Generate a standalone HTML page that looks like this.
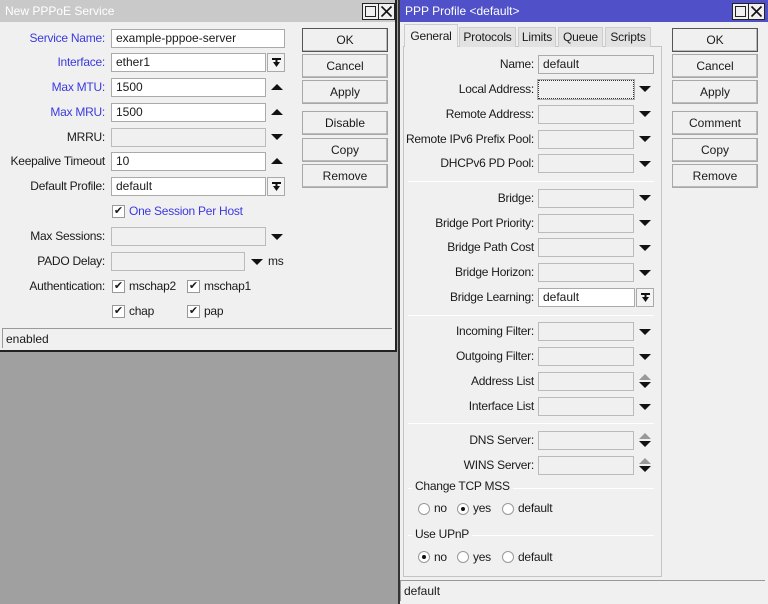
<!DOCTYPE html>
<html><head><meta charset="utf-8"><style>
*{box-sizing:border-box;margin:0;padding:0}
body{width:768px;height:604px;background:#a0a0a0;position:relative;overflow:hidden;font-family:"Liberation Sans",sans-serif;font-size:12px;color:#1a1a1a}
.a{position:absolute}
.win{position:absolute;background:#f0f0f0}
.tb{position:absolute;left:0;top:0;right:0;height:22px;color:#fff;font-size:12px;line-height:22px;padding-left:5px}
.tbb{position:absolute;top:3px;width:17px;height:17px}
.lbl{position:absolute;text-align:right;line-height:18px;white-space:nowrap;letter-spacing:-0.25px}
.blue{color:#3a3adf}
.in{position:absolute;height:19px;background:#fff;border:1px solid #aaa;line-height:17px;padding-left:4px}
.dis{background:#f0f0f0;border:1px solid #bbb}
.btn{position:absolute;width:86px;height:24px;border:1px solid #a8a8a8;background:#f0f0f0;text-align:center;line-height:22px;box-shadow:inset -1px -1px 0 #bbb}
.dn{position:absolute;width:0;height:0;border-left:6px solid transparent;border-right:6px solid transparent;border-top:6px solid #111}
.up{position:absolute;width:0;height:0;border-left:6px solid transparent;border-right:6px solid transparent;border-bottom:6px solid #111}
.dd{position:absolute;width:18px;height:19px;border:1px solid #aaa;background:#f4f4f4}
.dd svg{position:absolute;left:4px;top:4px}
.cb{position:absolute;width:13px;height:13px;border:1px solid #999;background:#fff;font-size:11px;line-height:11px;text-align:center}
.sep{position:absolute;height:1px;background:#c8c8c8;border-bottom:1px solid #fff}
.rad{position:absolute;width:12px;height:12px;border-radius:50%;border:1px solid #999;background:#fff}
.rad.on::after{content:"";position:absolute;left:3px;top:3px;width:4px;height:4px;border-radius:50%;background:#111}
.tab{position:absolute;top:27px;height:20px;background:#e2e2e2;border:1px solid #ccc;border-bottom:none;line-height:19px;text-align:center;letter-spacing:-0.2px}
</style></head><body>

<!-- Left window -->
<div class="win" style="left:0;top:0;width:397px;height:352px;border-right:2px solid #222;border-bottom:2px solid #222">
<div class="tb" style="background:#c9c9c9">New PPPoE Service</div>
<svg class="tbb" style="left:362px" viewBox="0 0 17 17"><rect x="0.5" y="0.5" width="16" height="16" fill="#f0f0f0" stroke="#222"/><rect x="3.5" y="3.5" width="10" height="10" fill="none" stroke="#222"/></svg>
<svg class="tbb" style="left:378px" viewBox="0 0 17 17"><rect x="0.5" y="0.5" width="16" height="16" fill="#f0f0f0" stroke="#222"/><path d="M3.5 3.5L13.5 13.5M13.5 3.5L3.5 13.5" stroke="#111" stroke-width="1.6"/></svg>

<div class="lbl blue" style="right:290px;top:29px">Service Name:</div><div class="in" style="left:111px;top:29px;width:174px">example-pppoe-server</div>
<div class="lbl blue" style="right:290px;top:53px">Interface:</div><div class="in" style="left:111px;top:53px;width:155px">ether1</div><div class="dd" style="left:267px;top:53px"><svg width="9" height="10"><path d="M0 1h9" stroke="#111" stroke-width="2"/><path d="M1 4h7l-3.5 5z" fill="#111"/><path d="M4.5 2v4" stroke="#111" stroke-width="2"/></svg></div>
<div class="lbl blue" style="right:290px;top:78px">Max MTU:</div><div class="in" style="left:111px;top:78px;width:155px">1500</div><div class="up" style="left:271px;top:84px"></div>
<div class="lbl blue" style="right:290px;top:103px">Max MRU:</div><div class="in" style="left:111px;top:103px;width:155px">1500</div><div class="up" style="left:271px;top:109px"></div>
<div class="lbl" style="right:290px;top:128px">MRRU:</div><div class="in dis" style="left:111px;top:128px;width:155px"></div><div class="dn" style="left:271px;top:134px"></div>
<div class="lbl" style="right:290px;top:152px">Keepalive Timeout</div><div class="in" style="left:111px;top:152px;width:155px">10</div><div class="up" style="left:271px;top:158px"></div>
<div class="lbl" style="right:290px;top:177px">Default Profile:</div><div class="in" style="left:111px;top:177px;width:155px">default</div><div class="dd" style="left:267px;top:177px"><svg width="9" height="10"><path d="M0 1h9" stroke="#111" stroke-width="2"/><path d="M1 4h7l-3.5 5z" fill="#111"/><path d="M4.5 2v4" stroke="#111" stroke-width="2"/></svg></div>
<div class="cb" style="left:112px;top:205px">✔</div><div class="lbl blue" style="left:129px;top:202px">One Session Per Host</div>
<div class="lbl" style="right:290px;top:227px">Max Sessions:</div><div class="in dis" style="left:111px;top:227px;width:155px"></div><div class="dn" style="left:271px;top:234px"></div>
<div class="lbl" style="right:290px;top:252px">PADO Delay:</div><div class="in dis" style="left:111px;top:252px;width:134px"></div><div class="dn" style="left:251px;top:259px"></div><div class="lbl" style="left:268px;top:252px">ms</div>
<div class="lbl" style="right:290px;top:277px">Authentication:</div>
<div class="cb" style="left:112px;top:280px">✔</div><div class="lbl" style="left:129px;top:277px">mschap2</div>
<div class="cb" style="left:187px;top:280px">✔</div><div class="lbl" style="left:204px;top:277px">mschap1</div>
<div class="cb" style="left:112px;top:305px">✔</div><div class="lbl" style="left:129px;top:302px">chap</div>
<div class="cb" style="left:187px;top:305px">✔</div><div class="lbl" style="left:204px;top:302px">pap</div>

<div class="btn" style="left:302px;top:28px;border-color:#555">OK</div>
<div class="btn" style="left:302px;top:54px">Cancel</div>
<div class="btn" style="left:302px;top:80px">Apply</div>
<div class="btn" style="left:302px;top:111px">Disable</div>
<div class="btn" style="left:302px;top:138px">Copy</div>
<div class="btn" style="left:302px;top:164px">Remove</div>

<div class="a" style="left:2px;top:328px;width:390px;height:20px;border-top:1px solid #999;border-left:1px solid #999;line-height:20px;padding-left:3px">enabled</div>
</div>

<!-- Right window -->
<div class="win" style="left:398px;top:0;width:370px;height:604px;border-left:2px solid #333">
<div class="tb" style="background:#5050c8">PPP Profile &lt;default&gt;</div>
<svg class="tbb" style="left:332px" viewBox="0 0 17 17"><rect x="0.5" y="0.5" width="16" height="16" fill="#f0f0f0" stroke="#222"/><rect x="3.5" y="3.5" width="10" height="10" fill="none" stroke="#222"/></svg>
<svg class="tbb" style="left:348px" viewBox="0 0 17 17"><rect x="0.5" y="0.5" width="16" height="16" fill="#f0f0f0" stroke="#222"/><path d="M3.5 3.5L13.5 13.5M13.5 3.5L3.5 13.5" stroke="#111" stroke-width="1.6"/></svg>

<div class="a" style="left:3px;top:46px;width:259px;height:531px;border:1px solid #c4c4c4"></div>
<div class="tab" style="left:4px;top:24px;width:54px;height:23px;background:#f0f0f0;line-height:22px">General</div>
<div class="tab" style="left:59px;width:57px">Protocols</div>
<div class="tab" style="left:118px;width:38px">Limits</div>
<div class="tab" style="left:158px;width:45px">Queue</div>
<div class="tab" style="left:205px;width:46px">Scripts</div>

<div class="lbl" style="right:234px;top:55px">Name:</div><div class="in dis" style="left:138px;top:55px;width:116px;background:#f0f0f0;border-color:#aaa">default</div>
<div class="lbl" style="right:234px;top:80px">Local Address:</div><div class="in dis" style="left:138px;top:80px;width:96px;border:1px dotted #333;outline:1px solid #aaa"></div><div class="dn" style="left:239px;top:86px"></div>
<div class="lbl" style="right:234px;top:105px">Remote Address:</div><div class="in dis" style="left:138px;top:105px;width:96px"></div><div class="dn" style="left:239px;top:111px"></div>
<div class="lbl" style="right:234px;top:130px">Remote IPv6 Prefix Pool:</div><div class="in dis" style="left:138px;top:130px;width:96px"></div><div class="dn" style="left:239px;top:136px"></div>
<div class="lbl" style="right:234px;top:154px">DHCPv6 PD Pool:</div><div class="in dis" style="left:138px;top:154px;width:96px"></div><div class="dn" style="left:239px;top:161px"></div>
<div class="sep" style="left:8px;top:181px;width:246px"></div>
<div class="lbl" style="right:234px;top:189px">Bridge:</div><div class="in dis" style="left:138px;top:189px;width:96px"></div><div class="dn" style="left:239px;top:195px"></div>
<div class="lbl" style="right:234px;top:214px">Bridge Port Priority:</div><div class="in dis" style="left:138px;top:214px;width:96px"></div><div class="dn" style="left:239px;top:220px"></div>
<div class="lbl" style="right:234px;top:238px">Bridge Path Cost</div><div class="in dis" style="left:138px;top:238px;width:96px"></div><div class="dn" style="left:239px;top:245px"></div>
<div class="lbl" style="right:234px;top:263px">Bridge Horizon:</div><div class="in dis" style="left:138px;top:263px;width:96px"></div><div class="dn" style="left:239px;top:270px"></div>
<div class="lbl" style="right:234px;top:288px">Bridge Learning:</div><div class="in" style="left:138px;top:288px;width:97px">default</div><div class="dd" style="left:236px;top:288px"><svg width="9" height="10"><path d="M0 1h9" stroke="#111" stroke-width="2"/><path d="M1 4h7l-3.5 5z" fill="#111"/><path d="M4.5 2v4" stroke="#111" stroke-width="2"/></svg></div>
<div class="sep" style="left:8px;top:315px;width:246px"></div>
<div class="lbl" style="right:234px;top:322px">Incoming Filter:</div><div class="in dis" style="left:138px;top:322px;width:96px"></div><div class="dn" style="left:239px;top:329px"></div>
<div class="lbl" style="right:234px;top:347px">Outgoing Filter:</div><div class="in dis" style="left:138px;top:347px;width:96px"></div><div class="dn" style="left:239px;top:354px"></div>
<div class="lbl" style="right:234px;top:372px">Address List</div><div class="in dis" style="left:138px;top:372px;width:96px"></div><div class="up" style="left:239px;top:374px;border-bottom-color:#999"></div><div class="dn" style="left:239px;top:382px"></div>
<div class="lbl" style="right:234px;top:397px">Interface List</div><div class="in dis" style="left:138px;top:397px;width:96px"></div><div class="dn" style="left:239px;top:404px"></div>
<div class="sep" style="left:8px;top:423px;width:246px"></div>
<div class="lbl" style="right:234px;top:431px">DNS Server:</div><div class="in dis" style="left:138px;top:431px;width:96px"></div><div class="up" style="left:239px;top:433px;border-bottom-color:#999"></div><div class="dn" style="left:239px;top:441px"></div>
<div class="lbl" style="right:234px;top:456px">WINS Server:</div><div class="in dis" style="left:138px;top:456px;width:96px"></div><div class="up" style="left:239px;top:458px;border-bottom-color:#999"></div><div class="dn" style="left:239px;top:466px"></div>

<div class="sep" style="left:8px;top:488px;width:246px"></div>
<div class="lbl" style="left:12px;top:477px;background:#f0f0f0;padding:0 3px">Change TCP MSS</div>
<div class="rad" style="left:18px;top:503px"></div><div class="lbl" style="left:34px;top:499px">no</div>
<div class="rad on" style="left:57px;top:503px"></div><div class="lbl" style="left:73px;top:499px">yes</div>
<div class="rad" style="left:102px;top:503px"></div><div class="lbl" style="left:118px;top:499px">default</div>

<div class="sep" style="left:8px;top:535px;width:246px"></div>
<div class="lbl" style="left:12px;top:525px;background:#f0f0f0;padding:0 3px">Use UPnP</div>
<div class="rad on" style="left:18px;top:551px"></div><div class="lbl" style="left:34px;top:548px">no</div>
<div class="rad" style="left:57px;top:551px"></div><div class="lbl" style="left:73px;top:548px">yes</div>
<div class="rad" style="left:102px;top:551px"></div><div class="lbl" style="left:118px;top:548px">default</div>

<div class="btn" style="left:272px;top:28px;border-color:#555">OK</div>
<div class="btn" style="left:272px;top:54px">Cancel</div>
<div class="btn" style="left:272px;top:80px">Apply</div>
<div class="btn" style="left:272px;top:111px">Comment</div>
<div class="btn" style="left:272px;top:138px">Copy</div>
<div class="btn" style="left:272px;top:164px">Remove</div>

<div class="a" style="left:0px;top:580px;width:365px;height:21px;border-top:1px solid #999;border-left:1px solid #999;line-height:20px;padding-left:3px">default</div>
</div>
</body></html>
